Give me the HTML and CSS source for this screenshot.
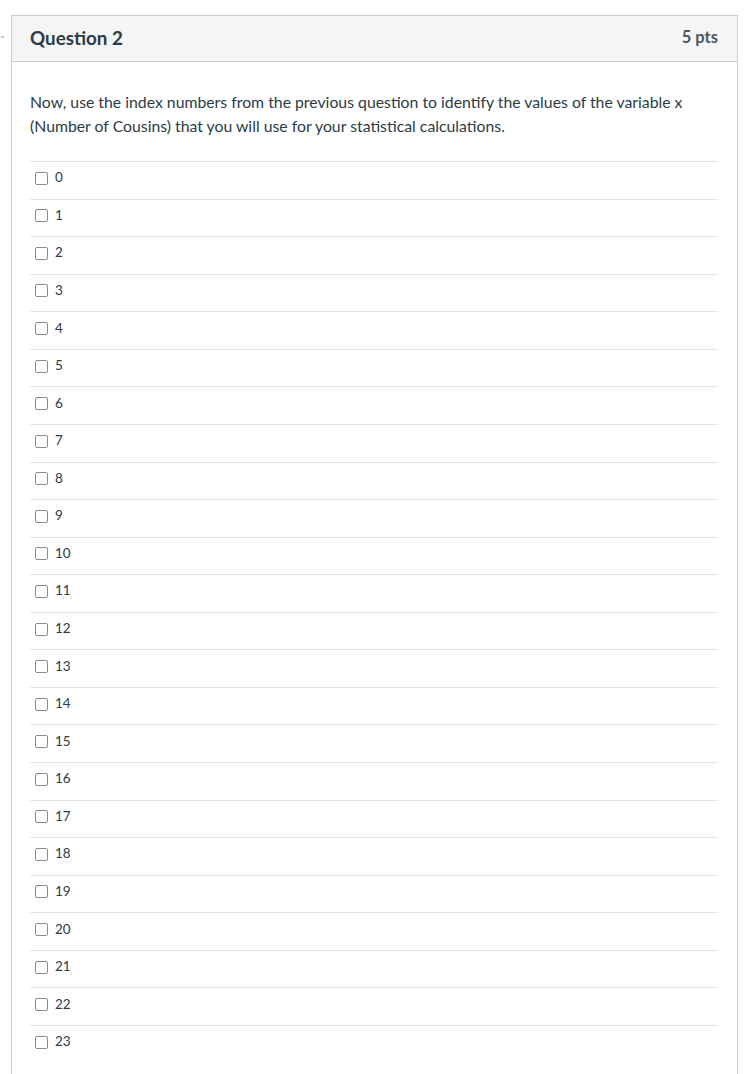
FILE: index.html
```html
<!DOCTYPE html>
<html>
<head>
<meta charset="utf-8">
<link rel="stylesheet" href="styles.css">
</head>
<body>
<div class="page">
  <span class="nav-dot"></span>
  <div class="question">
    <div class="q-header">
      <span class="q-title">Question 2</span>
      <span class="q-pts">5 pts</span>
    </div>
    <div class="q-body">
      <p class="q-text">Now, use the index numbers from the previous question to identify the values of the variable x (Number of Cousins) that you will use for your statistical calculations.</p>
      <div class="answers">
        <label class="answer"><span class="box"></span><span class="lbl">0</span></label>
        <label class="answer"><span class="box"></span><span class="lbl">1</span></label>
        <label class="answer"><span class="box"></span><span class="lbl">2</span></label>
        <label class="answer"><span class="box"></span><span class="lbl">3</span></label>
        <label class="answer"><span class="box"></span><span class="lbl">4</span></label>
        <label class="answer"><span class="box"></span><span class="lbl">5</span></label>
        <label class="answer"><span class="box"></span><span class="lbl">6</span></label>
        <label class="answer"><span class="box"></span><span class="lbl">7</span></label>
        <label class="answer"><span class="box"></span><span class="lbl">8</span></label>
        <label class="answer"><span class="box"></span><span class="lbl">9</span></label>
        <label class="answer"><span class="box"></span><span class="lbl">10</span></label>
        <label class="answer"><span class="box"></span><span class="lbl">11</span></label>
        <label class="answer"><span class="box"></span><span class="lbl">12</span></label>
        <label class="answer"><span class="box"></span><span class="lbl">13</span></label>
        <label class="answer"><span class="box"></span><span class="lbl">14</span></label>
        <label class="answer"><span class="box"></span><span class="lbl">15</span></label>
        <label class="answer"><span class="box"></span><span class="lbl">16</span></label>
        <label class="answer"><span class="box"></span><span class="lbl">17</span></label>
        <label class="answer"><span class="box"></span><span class="lbl">18</span></label>
        <label class="answer"><span class="box"></span><span class="lbl">19</span></label>
        <label class="answer"><span class="box"></span><span class="lbl">20</span></label>
        <label class="answer"><span class="box"></span><span class="lbl">21</span></label>
        <label class="answer"><span class="box"></span><span class="lbl">22</span></label>
        <label class="answer"><span class="box"></span><span class="lbl">23</span></label>
      </div>
    </div>
  </div>
</div>
</body>
</html>
```
FILE: styles.css
```css
html, body {
  margin: 0;
  padding: 0;
  background: #ffffff;
}
body {
  font-family: Lato, "Open Sans", "Liberation Sans", sans-serif;
  color: #2d3b45;
  overflow: hidden;
}
.page {
  position: relative;
  padding: 15px 16px 0 11px;
}
.nav-dot {
  position: absolute;
  left: 1px;
  top: 36px;
  width: 3px;
  height: 2px;
  background: #c8c8c8;
}
.question {
  border: 1px solid #c7cdd1;
  width: 725px;
  min-height: 1200px;
}
.q-header {
  box-sizing: border-box;
  display: flex;
  justify-content: space-between;
  align-items: center;
  height: 46px;
  padding: 0 19px 3px 18px;
  background: #f5f5f5;
  border-bottom: 1px solid #c7cdd1;
}
.q-title {
  font-size: 18.8px;
  font-weight: 700;
  color: #2d3b45;
}
.q-pts {
  font-size: 16.5px;
  font-weight: 700;
  color: #4a5660;
}
.q-body {
  padding: 28px 19px 0 18px;
}
.q-text {
  margin: 0 0 23px 0;
  font-size: 15.8px;
  line-height: 24px;
  color: #2d3b45;
}
.answers {
  display: flex;
  flex-direction: column;
}
.answer {
  box-sizing: border-box;
  height: 37.57px;
  border-top: 1px solid #e2e4e6;
  display: flex;
  align-items: center;
  padding: 0 0 6px 5px;
  gap: 7px;
  font-size: 13.5px;
  color: #2d3b45;
}
.box {
  box-sizing: border-box;
  width: 13px;
  height: 13px;
  border: 1px solid #8b8b8b;
  border-radius: 2px;
  background: #fff;
  margin-top: 2px;
}
.lbl {
  line-height: 16px;
}
```
